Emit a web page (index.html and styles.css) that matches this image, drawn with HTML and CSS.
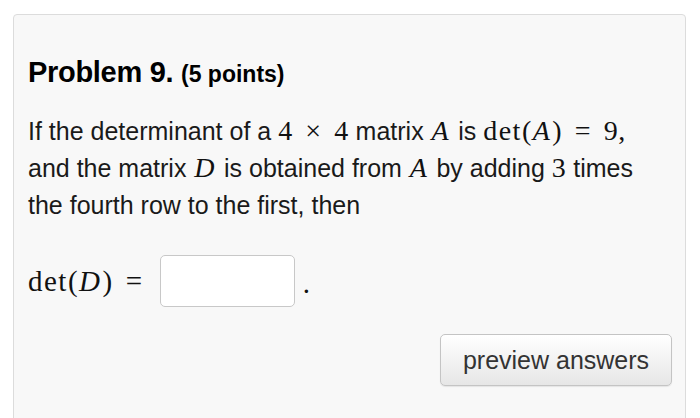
FILE: index.html
```html
<!DOCTYPE html>
<html>
<head>
<meta charset="utf-8">
<link rel="stylesheet" href="styles.css">
</head>
<body>
<div class="panel">
  <h2 class="title">Problem 9. <span class="pts">(5 points)</span></h2>
  <p class="text">If the determinant of a <span class="m">4<span class="bin">×</span>4</span> matrix <span class="m"><i>A</i></span> is <span class="m"><span class="fn">det</span>(<i>A</i>)<span class="rel">=</span>9,</span><br>and the matrix <span class="m"><i>D</i></span> is obtained from <span class="m"><i>A</i></span> by adding <span class="m">3</span> times<br>the fourth row to the first, then</p>
  <div class="answer">
    <span class="m"><span class="fn">det</span>(<i>D</i>)<span class="rel">=</span></span>
    <span class="box"></span>
    <span class="m dot">.</span>
  </div>
  <div class="actions">
    <button class="btn">preview answers</button>
  </div>
</div>
</body>
</html>
```
FILE: styles.css
```css
html, body {
  margin: 0;
  background: #ffffff;
}
body {
  font-family: "Liberation Sans", Arial, sans-serif;
  color: #111;
}
.panel {
  margin: 14px 0 0 13px;
  width: 673px;
  height: 420px;
  box-sizing: border-box;
  border: 1px solid #dcdcdc;
  border-radius: 4px;
  background: #f8f8f8;
  padding: 39px 13px 0 14px;
}
.title {
  margin: 0;
  font-size: 29px;
  line-height: 36px;
  font-weight: bold;
  color: #000;
  letter-spacing: -0.3px;
}
.pts {
  font-size: 23px;
  letter-spacing: 0;
}
.text {
  margin: 21px 0 0 0;
  font-size: 25px;
  line-height: 37px;
  color: #1a1a1a;
  white-space: nowrap;
}
.m {
  font-family: "Liberation Serif", "Times New Roman", serif;
  font-size: 28px;
  line-height: 1;
  color: #111;
  letter-spacing: 0.5px;
}
.m i {
  font-style: italic;
  margin: 0 2px 0 1px;
}
.fn {
  letter-spacing: 1.5px;
}
.bin {
  margin: 0 0.45em;
}
.rel {
  margin: 0 0.45em;
}
.answer {
  margin-top: 31px;
  display: flex;
  align-items: center;
  height: 52px;
}
.answer .m {
  font-size: 29px;
}
.box {
  display: block;
  width: 135px;
  height: 52px;
  box-sizing: border-box;
  margin-left: 4px;
  background: #fff;
  border: 1px solid #c8c8c8;
  border-radius: 5px;
}
.answer .dot {
  margin-left: 8px;
  margin-top: 4px;
}
.actions {
  margin-top: 27px;
  display: flex;
  justify-content: flex-end;
}
.btn {
  width: 232px;
  height: 52px;
  font-family: "Liberation Sans", Arial, sans-serif;
  font-size: 25px;
  color: #333;
  background: linear-gradient(#ffffff, #e6e6e6);
  border: 1px solid #c4c4c4;
  border-radius: 5px;
  box-shadow: 0 1px 1px rgba(0,0,0,0.08);
  padding: 0;
}
```
